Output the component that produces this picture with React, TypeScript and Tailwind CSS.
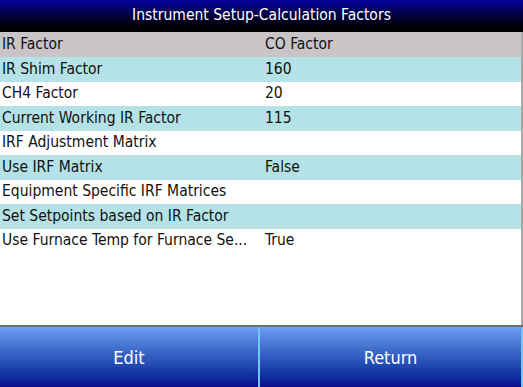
import React from "react";

const rows = [
  { label: "IR Shim Factor", value: "160" },
  { label: "CH4 Factor", value: "20" },
  { label: "Current Working IR Factor", value: "115" },
  { label: "IRF Adjustment Matrix", value: "" },
  { label: "Use IRF Matrix", value: "False" },
  { label: "Equipment Specific IRF Matrices", value: "" },
  { label: "Set Setpoints based on IR Factor", value: "" },
  { label: "Use Furnace Temp for Furnace Se...", value: "True" },
];

export default function App() {
  return (
    <div
      className="w-[523px] h-[387px] flex flex-col bg-white text-[#111] overflow-hidden"
      style={{ fontFamily: "'DejaVu Sans Condensed', 'DejaVu Sans', sans-serif" }}
    >
      {/* タイトルバー */}
      <div className="h-[32px] shrink-0 flex items-center justify-center bg-gradient-to-b from-[#0606a0] to-[#000000] text-white text-[15.5px]">
        Instrument Setup-Calculation Factors
      </div>

      {/* リスト */}
      <div className="flex-1 flex flex-col border-r-2 border-[#a8a8a8]">
        <div className="h-[25px] flex items-center bg-[#c8c4c8] text-[15.5px]">
          <div className="w-[265px] pl-[2px]">IR Factor</div>
          <div>CO Factor</div>
        </div>
        {rows.map((r, i) => (
          <div
            key={r.label}
            className={`h-[24.5px] flex items-center text-[15.5px] ${i % 2 === 0 ? "bg-[#b4e2e6]" : "bg-white"}`}
          >
            <div className="w-[265px] pl-[2px] whitespace-nowrap">{r.label}</div>
            <div>{r.value}</div>
          </div>
        ))}
      </div>

      {/* ボタン */}
      <div className="h-[62px] shrink-0 flex border-t-2 border-[#6e6e6e]">
        <button className="w-[260px] h-full flex items-center justify-center bg-gradient-to-b from-[#6c9ef2] to-[#0a0a8c] text-white text-[18px] border-r-2 border-[#72c6f0]">
          Edit
        </button>
        <button className="flex-1 h-full flex items-center justify-center bg-gradient-to-b from-[#6c9ef2] to-[#0a0a8c] text-white text-[18px] border-r-2 border-[#72c6f0]">
          Return
        </button>
      </div>
    </div>
  );
}
